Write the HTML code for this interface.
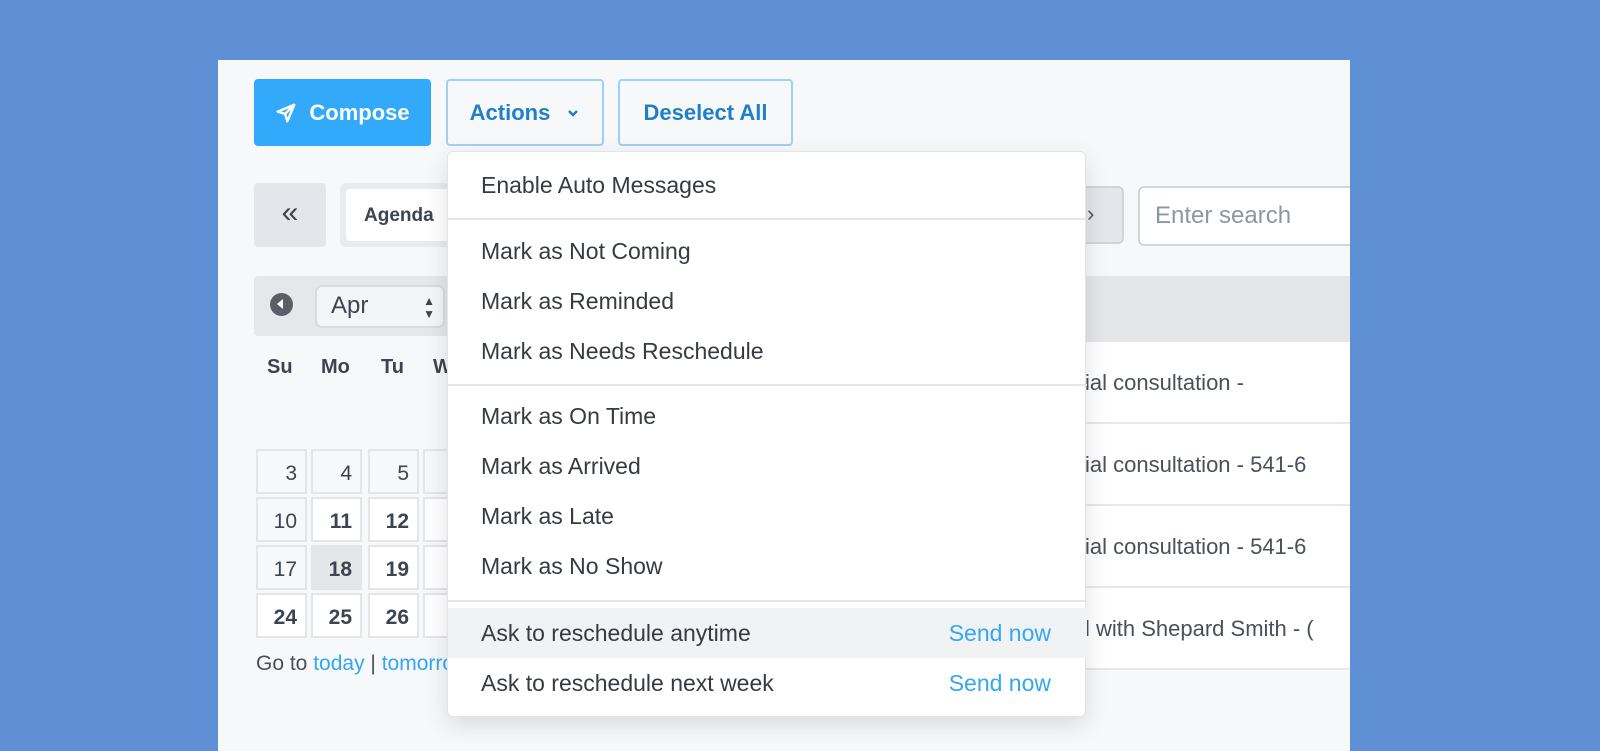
<!DOCTYPE html>
<html><head><style>
*{box-sizing:border-box;margin:0;padding:0}
body{width:1600px;height:751px;background:#5f8fd5;font-family:"Liberation Sans",sans-serif;position:relative;overflow:hidden;color:#3d4451}
.a{position:absolute}
.panel{left:218px;top:60px;width:1132px;height:691px;background:#f7f8fa;overflow:hidden}
.btn{position:absolute;top:79px;height:67px;border-radius:4px;font-size:22px;font-weight:bold;display:flex;align-items:center;justify-content:center}
.cell{position:absolute;width:51px;height:45px;border:2px solid #e3e5e9;font-size:21px;text-align:right;padding:11px 8px 0 0;color:#3d4451}
.mi{position:absolute;left:0;width:639px;height:50px;font-size:23px;padding-left:33px;line-height:50px;color:#353a44}
.sep{position:absolute;left:0;width:639px;height:2px;background:#e3e6ea}
.row{position:absolute;left:1060px;width:300px;height:82px;border-bottom:2px solid #e6e8eb;font-size:22px;line-height:82px;padding-left:25px;color:#4a505b;white-space:nowrap}
.send{position:absolute;right:36px;color:#33a7f2}
</style></head><body>
<div class="a panel"></div>
<div class="btn" style="left:254px;width:177px;background:#33a9fb;color:#fff"><svg width="22" height="22" viewBox="0 0 24 24" style="margin-right:12px"><path d="M21 3L3 10.5l8 2.5 2.5 8z M11 13L21 3" fill="none" stroke="#fff" stroke-width="2.6" stroke-linejoin="round"/></svg>Compose</div>
<div class="btn" style="left:446px;width:158px;border:2px solid #9fd0f7;color:#1f7fc8">Actions<svg width="14" height="14" viewBox="0 0 14 14" style="margin-left:16px"><path d="M3 5l4 4 4-4" fill="none" stroke="#1f7fc8" stroke-width="2.4"/></svg></div>
<div class="btn" style="left:618px;width:175px;border:2px solid #9fd0f7;color:#1f7fc8">Deselect All</div>
<div class="a" style="left:254px;top:183px;width:72px;height:64px;background:#e3e6ea;border-radius:4px;font-size:30px;text-align:center;line-height:60px;color:#3d4451">«</div>
<div class="a" style="left:340px;top:183px;width:120px;height:64px;background:#e9ebee;border-radius:6px"></div>
<div class="a" style="left:346px;top:189px;width:110px;height:52px;background:#fff;border-radius:4px;font-size:19px;padding:16px 0 0 18px;font-weight:bold;color:#3d4451">Agenda</div>
<div class="a" style="left:1070px;top:186px;width:54px;height:58px;background:#e3e6ea;border:2px solid #cfd4db;border-radius:6px;font-size:22px;line-height:52px;padding-left:15px;color:#555">›</div>
<div class="a" style="left:1138px;top:186px;width:230px;height:60px;background:#fff;border:2px solid #cfd6df;border-radius:6px;font-size:24px;line-height:56px;padding-left:15px;color:#8c97a3">Enter search</div>
<div class="a" style="left:254px;top:276px;width:1100px;height:60px;background:#e5e7ea;border-radius:4px 0 0 4px"></div>
<div class="a" style="left:1086px;top:276px;width:270px;height:66px;background:#e4e6e9"></div>
<div class="a" style="left:270px;top:293px;width:23px;height:23px;border-radius:50%;background:#5a5e66"><div class="a" style="left:7px;top:6px;border:5px solid transparent;border-right:6px solid #fff;border-left:0"></div></div>
<div class="a" style="left:315px;top:285px;width:130px;height:43px;background:#f4f5f7;border:2px solid #d6dbe2;border-radius:7px;font-size:24px;line-height:38px;padding-left:14px;color:#3d4451">Apr<span class="a" style="right:8px;top:0;font-size:12px;line-height:13px;top:8px;color:#444">▲<br>▼</span></div>
<div class="a" style="left:267px;top:356px;font-size:20px;font-weight:bold;color:#3d4451;word-spacing:0"><span style="position:absolute;left:0">Su</span><span style="position:absolute;left:54px">Mo</span><span style="position:absolute;left:114px">Tu</span><span style="position:absolute;left:166px">W</span></div>
<div class="cell" style="left:256px;top:449px">3</div><div class="cell" style="left:311px;top:449px">4</div><div class="cell" style="left:368px;top:449px">5</div><div class="cell" style="left:423px;top:449px"></div>
<div class="cell" style="left:256px;top:497px">10</div><div class="cell" style="left:311px;top:497px;background:#fff;font-weight:bold">11</div><div class="cell" style="left:368px;top:497px;background:#fff;font-weight:bold">12</div><div class="cell" style="left:423px;top:497px;background:#fff"></div>
<div class="cell" style="left:256px;top:545px">17</div><div class="cell" style="left:311px;top:545px;background:#e4e6e9;font-weight:bold">18</div><div class="cell" style="left:368px;top:545px;background:#fff;font-weight:bold">19</div><div class="cell" style="left:423px;top:545px;background:#fff"></div>
<div class="cell" style="left:256px;top:593px;background:#fff;font-weight:bold">24</div><div class="cell" style="left:311px;top:593px;background:#fff;font-weight:bold">25</div><div class="cell" style="left:368px;top:593px;background:#fff;font-weight:bold">26</div><div class="cell" style="left:423px;top:593px;background:#fff"></div>
<div class="a" style="left:256px;top:652px;font-size:21px;color:#4a505b">Go to <span style="color:#33a7f2">today</span> | <span style="color:#33a7f2">tomorrow</span></div>
<div class="row" style="top:342px;background:#fff">ial consultation -</div>
<div class="row" style="top:424px;background:#fff">ial consultation - 541-6</div>
<div class="row" style="top:506px;background:#fff">ial consultation - 541-6</div>
<div class="row" style="top:588px;background:#fff">l with Shepard Smith - (</div>
<div class="a" style="left:1350px;top:0;width:250px;height:751px;background:#5f8fd5"></div>
<div class="a" style="left:447px;top:151px;width:639px;height:566px;background:#fff;border:1px solid #e1e4e8;border-radius:6px;box-shadow:0 8px 24px rgba(0,0,0,.12)">
<div class="mi" style="top:8px">Enable Auto Messages</div>
<div class="sep" style="top:66px"></div>
<div class="mi" style="top:74px">Mark as Not Coming</div>
<div class="mi" style="top:124px">Mark as Reminded</div>
<div class="mi" style="top:174px">Mark as Needs Reschedule</div>
<div class="sep" style="top:232px"></div>
<div class="mi" style="top:239px">Mark as On Time</div>
<div class="mi" style="top:289px">Mark as Arrived</div>
<div class="mi" style="top:339px">Mark as Late</div>
<div class="mi" style="top:389px">Mark as No Show</div>
<div class="sep" style="top:448px"></div>
<div class="mi" style="top:456px;background:#f1f2f4">Ask to reschedule anytime<span class="send">Send now</span></div>
<div class="mi" style="top:506px">Ask to reschedule next week<span class="send">Send now</span></div>
</div>
</body></html>
